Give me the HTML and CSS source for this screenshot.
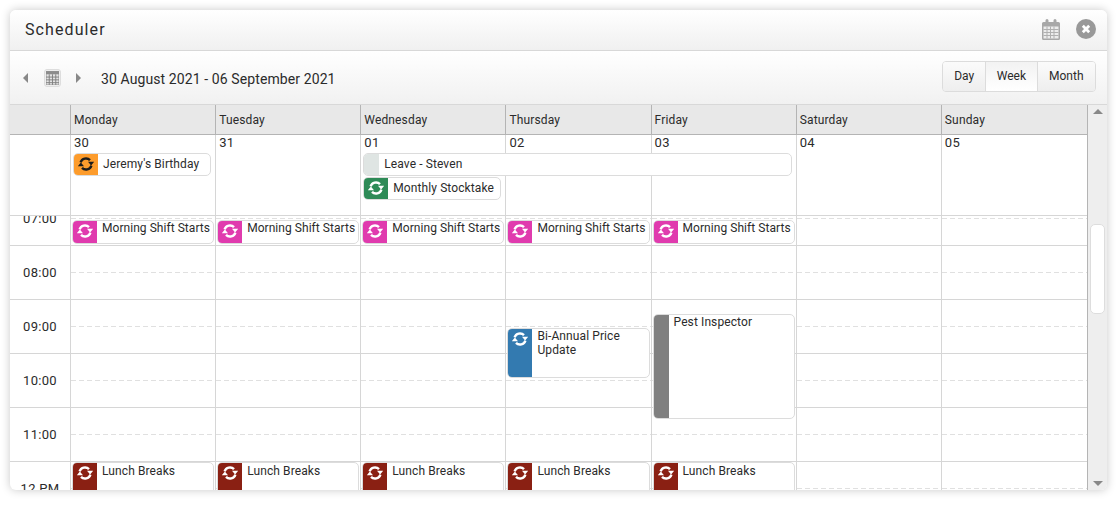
FILE: index.html
```html
<!DOCTYPE html>
<html lang="en">
<head>
  <meta charset="UTF-8" />
  <title>Scheduler</title>
  <link rel="stylesheet" href="styles.css">
</head>
<body>
  <svg class="defs" width="0" height="0">
    <symbol id="sync" viewBox="0 0 18 16">
      <path d="M3.6 6.4A5.6 5.6 0 0 1 13 4.2M14.4 9.6A5.6 5.6 0 0 1 5 11.8" fill="none" stroke-width="2.4"/>
      <path d="M11 5.8H17.2L14.1 9.6ZM0.8 10.2H7L3.9 6.4Z" stroke="none"/>
    </symbol>
    <symbol id="cal" viewBox="0 0 18 21">
      <path d="M1.5 3H3.5V1.5A1.5 1.5 0 0 1 6.5 1.5V3H11.5V1.5A1.5 1.5 0 0 1 14.5 1.5V3H16.5A1.5 1.5 0 0 1 18 4.5V19.5A1.5 1.5 0 0 1 16.5 21H1.5A1.5 1.5 0 0 1 0 19.5V4.5A1.5 1.5 0 0 1 1.5 3Z" fill="#a8a8a8"/>
      <path d="M1.5 7.5H16.5V19.5H1.5Z" fill="#ececec"/>
      <path d="M5 7.5V19.5M8.5 7.5V19.5M12 7.5V19.5M1.5 10.5H16.5M1.5 13.5H16.5M1.5 16.5H16.5" stroke="#b0b0b0" fill="none"/>
    </symbol>
    <symbol id="cal-grid" viewBox="0 0 14 15">
      <rect width="14" height="15" fill="#8c8c8c"/>
      <rect x="0.5" y="3.5" width="13" height="11" fill="#e4e4e4"/>
      <path d="M3.5 3.5V15M7 3.5V15M10.5 3.5V15M0 6.5H14M0 9.5H14M0 12.5H14" stroke="#808080" fill="none"/>
    </symbol>
  </svg>

  <div class="panel">
    <header class="titlebar">
      <h1>Scheduler</h1>
      <div class="title-tools">
        <svg class="cal-big"><use href="#cal"/></svg>
        <svg class="close-btn" viewBox="0 0 20 20">
          <circle cx="10" cy="10" r="10" fill="#999"/>
          <path d="M6.8 6.8L13.2 13.2M13.2 6.8L6.8 13.2" stroke="#fff" stroke-width="2.8" fill="none"/>
        </svg>
      </div>
    </header>

    <div class="toolbar">
      <span class="arrow-left"></span>
      <span class="cal-small"><svg><use href="#cal-grid"/></svg></span>
      <span class="arrow-right"></span>
      <span class="range">30 August 2021 - 06 September 2021</span>
      <div class="views">
        <button>Day</button>
        <button class="active">Week</button>
        <button>Month</button>
      </div>
    </div>

    <div class="cal-wrap">
      <div class="cal-main">
        <div class="day-head cols">
          <div></div>
          <div>Monday</div>
          <div>Tuesday</div>
          <div>Wednesday</div>
          <div>Thursday</div>
          <div>Friday</div>
          <div>Saturday</div>
          <div>Sunday</div>
        </div>

        <div class="allday cols">
          <div class="ad-cell"></div>
          <div class="ad-cell">30</div>
          <div class="ad-cell">31</div>
          <div class="ad-cell">01</div>
          <div class="ad-cell">02</div>
          <div class="ad-cell">03</div>
          <div class="ad-cell">04</div>
          <div class="ad-cell">05</div>

          <div class="ad-ev ev birthday">
            <span class="ev-side orange"><svg class="sync dark"><use href="#sync"/></svg></span>
            <span class="ev-text">Jeremy's Birthday</span>
          </div>
          <div class="ad-ev ev leave">
            <span class="ev-side pale"></span>
            <span class="ev-text">Leave - Steven</span>
          </div>
          <div class="ad-ev ev stocktake">
            <span class="ev-side green"><svg class="sync"><use href="#sync"/></svg></span>
            <span class="ev-text">Monthly Stocktake</span>
          </div>
        </div>

        <div class="time-scroll">
          <div class="time-inner">
            <div class="hour cols">
              <div class="gutter"><span>07:00</span></div>
              <div class="slot"><div class="ev morning"><span class="ev-side magenta"><svg class="sync"><use href="#sync"/></svg></span><span class="ev-text">Morning Shift Starts</span></div></div>
              <div class="slot"><div class="ev morning"><span class="ev-side magenta"><svg class="sync"><use href="#sync"/></svg></span><span class="ev-text">Morning Shift Starts</span></div></div>
              <div class="slot"><div class="ev morning"><span class="ev-side magenta"><svg class="sync"><use href="#sync"/></svg></span><span class="ev-text">Morning Shift Starts</span></div></div>
              <div class="slot"><div class="ev morning"><span class="ev-side magenta"><svg class="sync"><use href="#sync"/></svg></span><span class="ev-text">Morning Shift Starts</span></div></div>
              <div class="slot"><div class="ev morning"><span class="ev-side magenta"><svg class="sync"><use href="#sync"/></svg></span><span class="ev-text">Morning Shift Starts</span></div></div>
              <div class="slot"></div>
              <div class="slot"></div>
            </div>
            <div class="hour cols">
              <div class="gutter"><span>08:00</span></div>
              <div class="slot"></div><div class="slot"></div><div class="slot"></div><div class="slot"></div><div class="slot"></div><div class="slot"></div><div class="slot"></div>
            </div>
            <div class="hour cols">
              <div class="gutter"><span>09:00</span></div>
              <div class="slot"></div>
              <div class="slot"></div>
              <div class="slot"></div>
              <div class="slot"><div class="ev price"><span class="ev-side blue"><svg class="sync"><use href="#sync"/></svg></span><span class="ev-text">Bi-Annual Price Update</span></div></div>
              <div class="slot"><div class="ev pest"><span class="ev-side grey"></span><span class="ev-text">Pest Inspector</span></div></div>
              <div class="slot"></div>
              <div class="slot"></div>
            </div>
            <div class="hour cols">
              <div class="gutter"><span>10:00</span></div>
              <div class="slot"></div><div class="slot"></div><div class="slot"></div><div class="slot"></div><div class="slot"></div><div class="slot"></div><div class="slot"></div>
            </div>
            <div class="hour cols">
              <div class="gutter"><span>11:00</span></div>
              <div class="slot"></div><div class="slot"></div><div class="slot"></div><div class="slot"></div><div class="slot"></div><div class="slot"></div><div class="slot"></div>
            </div>
            <div class="hour cols">
              <div class="gutter"><span>12 PM</span></div>
              <div class="slot"><div class="ev lunch"><span class="ev-side maroon"><svg class="sync"><use href="#sync"/></svg></span><span class="ev-text">Lunch Breaks</span></div></div>
              <div class="slot"><div class="ev lunch"><span class="ev-side maroon"><svg class="sync"><use href="#sync"/></svg></span><span class="ev-text">Lunch Breaks</span></div></div>
              <div class="slot"><div class="ev lunch"><span class="ev-side maroon"><svg class="sync"><use href="#sync"/></svg></span><span class="ev-text">Lunch Breaks</span></div></div>
              <div class="slot"><div class="ev lunch"><span class="ev-side maroon"><svg class="sync"><use href="#sync"/></svg></span><span class="ev-text">Lunch Breaks</span></div></div>
              <div class="slot"><div class="ev lunch"><span class="ev-side maroon"><svg class="sync"><use href="#sync"/></svg></span><span class="ev-text">Lunch Breaks</span></div></div>
              <div class="slot"></div>
              <div class="slot"></div>
            </div>
          </div>
        </div>
      </div>

      <div class="scrollbar">
        <span class="sb-up"></span>
        <span class="sb-thumb"></span>
        <span class="sb-down"></span>
      </div>
    </div>
  </div>
</body>
</html>
```

FILE: styles.css
```css
:root {
  --texto: #2b2b2b;
  --linha: #d6d6d6;
  --linha-head: #b4b4b4;
}

* {
  box-sizing: border-box;
}

html, body {
  height: 100%;
}

body {
  margin: 0;
  padding: 10px;
  background-color: #fff;
  color: var(--texto);
  font-family: 'Roboto', 'Liberation Sans', sans-serif;
  font-size: 13px;
  overflow: hidden;
}

.defs {
  position: absolute;
}

.panel {
  display: flex;
  flex-direction: column;
  width: 1097px;
  height: 480px;
  background-color: #fff;
  border-radius: 6px;
  box-shadow: 0 0 10px rgba(0, 0, 0, 0.22);
  overflow: hidden;
}

/* title bar */
.titlebar {
  display: flex;
  align-items: center;
  justify-content: space-between;
  flex: none;
  height: 41px;
  padding: 0 11px 2px 15px;
  background: linear-gradient(#ffffff, #f0f0f0);
  border-bottom: 1px solid #d8d8d8;
}

.titlebar h1 {
  margin: 0;
  font-size: 16px;
  font-weight: 400;
  letter-spacing: 1.1px;
}

.title-tools {
  display: flex;
  align-items: center;
  gap: 16px;
}

.cal-big {
  width: 18px;
  height: 21px;
}

.close-btn {
  width: 20px;
  height: 20px;
}

/* toolbar */
.toolbar {
  display: flex;
  align-items: center;
  flex: none;
  height: 54px;
  padding: 0 11px 0 13px;
  background: linear-gradient(#ffffff, #f1f1f1);
  border-bottom: 1px solid #d8d8d8;
}

.arrow-left,
.arrow-right {
  width: 0;
  height: 0;
  border-top: 5px solid transparent;
  border-bottom: 5px solid transparent;
}

.arrow-left {
  border-right: 5px solid #888;
}

.arrow-right {
  border-left: 5px solid #888;
}

.cal-small {
  display: flex;
  align-items: center;
  justify-content: center;
  width: 17px;
  height: 18px;
  margin: 0 15px 0 16px;
  background-color: #eee;
  border: 1px solid #ddd;
  border-radius: 3px;
}

.cal-small svg {
  width: 13px;
  height: 14px;
}

.range {
  margin-left: 20px;
  padding-top: 2px;
  font-size: 14px;
  letter-spacing: 0.1px;
}

.views {
  display: flex;
  height: 31px;
  margin-left: auto;
  margin-top: -3px;
  border: 1px solid #dcdcdc;
  border-radius: 4px;
  overflow: hidden;
}

.views button {
  padding: 0 11px;
  background: linear-gradient(#fbfbfb, #eeeeee);
  border: none;
  border-left: 1px solid #dcdcdc;
  color: var(--texto);
  font-family: inherit;
  font-size: 12px;
}

.views button:first-child {
  border-left: none;
}

.views button:last-child {
  padding: 0 11.5px;
}

.views .active {
  padding: 0 10.5px;
  background: linear-gradient(#f2f2f2, #ffffff);
}

/* calendar */
.cal-wrap {
  display: flex;
  flex: 1;
  min-height: 0;
}

.cal-main {
  display: flex;
  flex-direction: column;
  width: 1078px;
  border-right: 1px solid var(--linha-head);
}

.cols {
  display: grid;
  grid-template-columns: 61px repeat(7, 1fr);
}

.day-head {
  flex: none;
  height: 30px;
  background-color: #e8e8e8;
  border-bottom: 1px solid var(--linha-head);
}

.day-head div {
  padding: 8px 0 0 3px;
  border-right: 1px solid var(--linha-head);
  font-size: 12px;
  letter-spacing: 0.15px;
}

.day-head div:last-child {
  border-right: none;
}

.allday {
  flex: none;
  grid-template-rows: 18px 24px 24px 1fr;
  height: 81px;
  border-bottom: 1px solid var(--linha);
}

.ad-cell {
  grid-row: 1 / -1;
  padding: 0 0 0 3px;
  border-right: 1px solid var(--linha);
  font-size: 13px;
  letter-spacing: 0.3px;
}

.ad-cell:nth-child(1) { grid-column: 1; }
.ad-cell:nth-child(2) { grid-column: 2; }
.ad-cell:nth-child(3) { grid-column: 3; }
.ad-cell:nth-child(4) { grid-column: 4; }
.ad-cell:nth-child(5) { grid-column: 5; }
.ad-cell:nth-child(6) { grid-column: 6; }
.ad-cell:nth-child(7) { grid-column: 7; }
.ad-cell:nth-child(8) { grid-column: 8; border-right: none; }

/* events */
.ev {
  display: flex;
  background-color: #fff;
  border: 1px solid #dcdcdc;
  border-radius: 5px;
  overflow: hidden;
  font-size: 12px;
  line-height: 14px;
  letter-spacing: 0.1px;
}

.ev-side {
  display: flex;
  justify-content: center;
  flex: none;
  width: 24px;
  padding-top: 2px;
}

.ev-text {
  padding: 0 0 0 5px;
}

.morning .ev-text {
  white-space: nowrap;
  letter-spacing: 0.05px;
}

.sync {
  width: 18px;
  height: 16px;
  fill: #fff;
  stroke: #fff;
}

.sync.dark {
  fill: #1c1c1c;
  stroke: #1c1c1c;
}

.orange { background-color: #fd9c2c; }
.pale { width: 15px; background-color: #dfe5e3; }
.green { background-color: #2e8b57; }
.magenta { background-color: #e03bae; }
.blue { background-color: #337ab0; }
.grey { width: 15px; background-color: #808080; }
.maroon { background-color: #8a2013; }

.ad-ev {
  height: 23px;
  margin: 0 5px 0 2px;
  align-items: stretch;
}

.ad-ev .ev-text {
  padding-top: 3px;
}

.birthday {
  grid-column: 2;
  grid-row: 2;
}

.leave {
  grid-column: 4 / 7;
  grid-row: 2;
}

.stocktake {
  grid-column: 4;
  grid-row: 3;
}

/* time grid */
.time-scroll {
  flex: 1;
  min-height: 0;
  overflow: hidden;
}

.time-inner {
  margin-top: -24px;
}

.hour {
  height: 54px;
  border-bottom: 1px solid var(--linha);
}

.gutter {
  padding-top: 19px;
  border-right: 1px solid var(--linha);
  line-height: 15px;
  text-align: center;
  font-size: 13px;
  letter-spacing: 0.3px;
}

.slot {
  position: relative;
  border-right: 1px solid var(--linha);
  background: linear-gradient(90deg, #e0e0e0 62%, transparent 62%) 0 26px / 8px 1px repeat-x;
}

.slot:last-child {
  border-right: none;
}

.slot .ev {
  position: absolute;
  left: 1px;
  right: 1px;
  z-index: 1;
}

.morning {
  top: 28px;
  height: 24px;
}

.price {
  top: 28px;
  height: 50px;
}

.pest {
  top: 14px;
  height: 105px;
}

.pest .ev-text {
  padding-left: 5px;
}

.lunch {
  top: 0;
  height: 50px;
}

.lunch .ev-text {
  padding-top: 1px;
}

/* scrollbar */
.scrollbar {
  position: relative;
  flex: 1;
  background-color: #eeeeee;
}

.sb-up,
.sb-down {
  position: absolute;
  left: 5px;
  width: 0;
  height: 0;
  border-left: 5px solid transparent;
  border-right: 5px solid transparent;
}

.sb-up {
  top: 4px;
  border-bottom: 5px solid #888;
}

.sb-down {
  bottom: 4px;
  border-top: 5px solid #888;
}

.sb-thumb {
  position: absolute;
  top: 119px;
  left: 2px;
  width: 15px;
  height: 90px;
  background-color: #fff;
  border: 1px solid #ddd;
  border-radius: 5px;
}
```
